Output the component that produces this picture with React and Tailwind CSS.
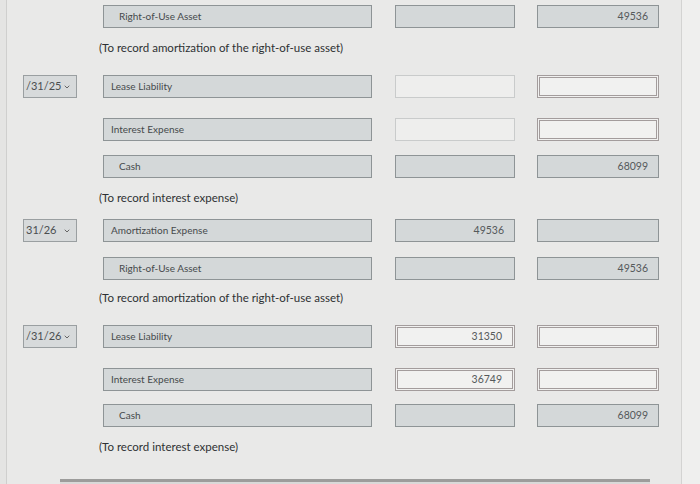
import React from 'react';
import { ChevronDown } from 'lucide-react';

const font = { fontFamily: 'Lato, "Open Sans", sans-serif' };

function Account({ label, credit }) {
    return (
        <div className={`w-[269px] h-full bg-[#d4d8d9] border border-[#8e9496] flex items-center text-[10px] text-[#464a4c] ${credit ? 'pl-[15px]' : 'pl-[7px]'}`}>
            {label}
        </div>
    );
}

function Amount({ kind, value, w = 'w-[120px]' }) {
    const styles = {
        gray: 'bg-[#d4d8d9] border border-[#8e9496]',
        light: 'bg-[#eeeeed] border border-[#c9cbcb]',
        double: 'bg-[#f1f1f0] border-[3px] border-double border-[#a39c9c]',
    };
    return (
        <div className={`${w} h-full ${styles[kind]} flex items-center justify-end pr-[10px] text-[10.5px] text-[#55595b]`}>
            {value}
        </div>
    );
}

function DateSelect({ value }) {
    return (
        <div className="w-[54px] h-full bg-[#d7dadb] border border-[#9a9fa1] flex items-center justify-between pl-[2px] pr-[5px] text-[11px] text-[#4a4e50]">
            <span>{value}</span>
            <ChevronDown className="w-[8px] h-[8px] text-[#666]" strokeWidth={3} />
        </div>
    );
}

function Row({ mt, date, label, credit, debitKind, debit, creditKind, creditVal }) {
    return (
        <div className={`flex h-[23px] pl-[16px] ${mt}`}>
            <div className="w-[54px] h-full">{date && <DateSelect value={date} />}</div>
            <div className="ml-[26px] h-full"><Account label={label} credit={credit} /></div>
            <div className="ml-[23px] h-full"><Amount kind={debitKind} value={debit} /></div>
            <div className="ml-[22px] h-full"><Amount kind={creditKind} value={creditVal} w="w-[122px]" /></div>
        </div>
    );
}

function Note({ mt, children }) {
    return (
        <div className={`h-[20px] pl-[92px] flex items-center text-[11.5px] text-[#2e3133] ${mt}`}>
            {children}
        </div>
    );
}

export default function App() {
    return (
        <div className="w-[700px] h-[484px] bg-[#e9e9e8] flex relative overflow-hidden" style={font}>
            {/* left edge */}
            <div className="w-[7px] h-full bg-[#e4e4e3] border-r border-[#cfcfce]" />

            {/* journal entries */}
            <div className="w-[675px] h-full border-r border-[#d3d3d2]">
                <Row mt="mt-[5px]" label="Right-of-Use Asset" credit debitKind="gray" creditKind="gray" creditVal="49536" />
                <Note mt="mt-[10px]">(To record amortization of the right-of-use asset)</Note>

                <Row mt="mt-[17px]" date="/31/25" label="Lease Liability" debitKind="light" creditKind="double" />
                <Row mt="mt-[20px]" label="Interest Expense" debitKind="light" creditKind="double" />
                <Row mt="mt-[14px]" label="Cash" credit debitKind="gray" creditKind="gray" creditVal="68099" />
                <Note mt="mt-[10px]">(To record interest expense)</Note>

                <Row mt="mt-[11px]" date="31/26" label="Amortization Expense" debitKind="gray" debit="49536" creditKind="gray" />
                <Row mt="mt-[15px]" label="Right-of-Use Asset" credit debitKind="gray" creditKind="gray" creditVal="49536" />
                <Note mt="mt-[8px]">(To record amortization of the right-of-use asset)</Note>

                <Row mt="mt-[17px]" date="/31/26" label="Lease Liability" debitKind="double" debit="31350" creditKind="double" />
                <Row mt="mt-[20px]" label="Interest Expense" debitKind="double" debit="36749" creditKind="double" />
                <Row mt="mt-[13px]" label="Cash" credit debitKind="gray" creditKind="gray" creditVal="68099" />
                <Note mt="mt-[10px]">(To record interest expense)</Note>
            </div>

            {/* right edge */}
            <div className="flex-1 h-full bg-[#efefee]" />

            {/* bottom edge of the panel */}
            <div className="absolute left-[60px] bottom-0 w-[590px] h-[5px] bg-[#9c9c9b] border-b-2 border-[#d9d9d8]" />
        </div>
    );
}
